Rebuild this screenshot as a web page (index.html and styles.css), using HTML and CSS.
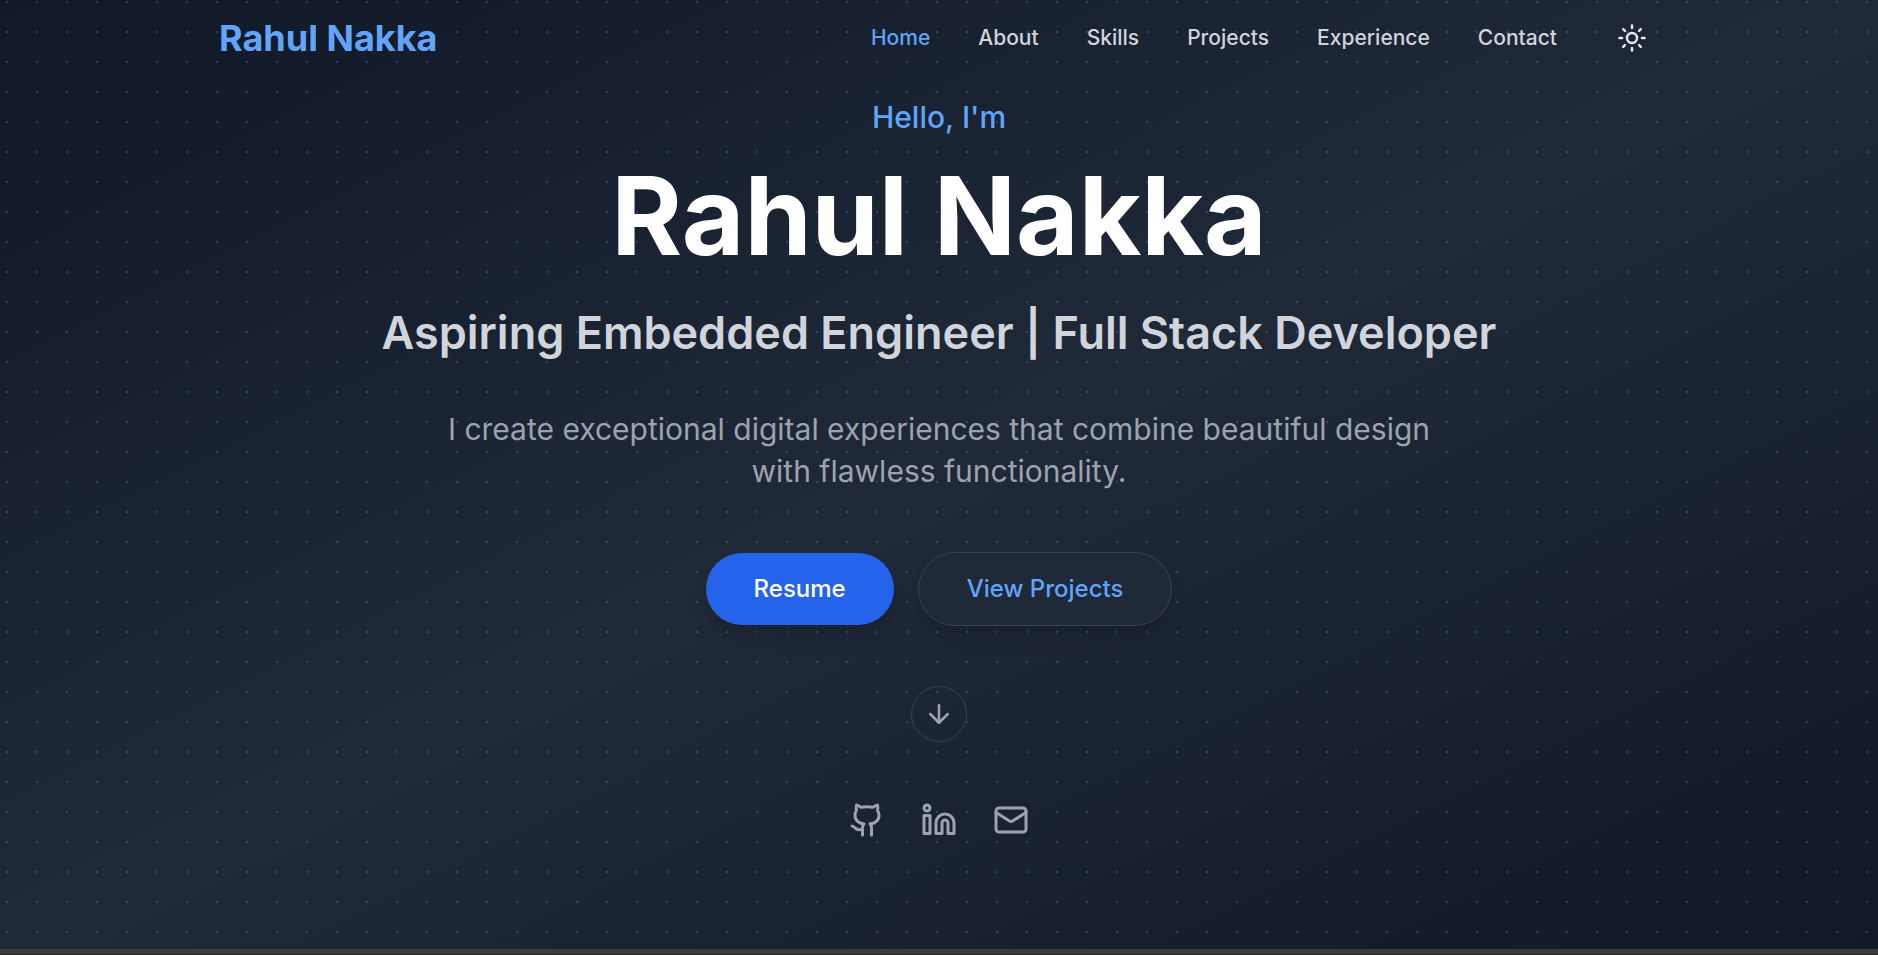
FILE: index.html
```html
<!DOCTYPE html>
<html lang="en">
<head>
    <meta charset="UTF-8">
    <meta name="viewport" content="width=device-width, initial-scale=1.0">
    <title>Rahul Nakka</title>
    <link rel="stylesheet" href="styles.css">
</head>
<body>
    <div class="page">
        <header class="navbar">
            <a href="#home" class="logo">Rahul Nakka</a>

            <nav class="nav-links">
                <a href="#home" class="active">Home</a>
                <a href="#about">About</a>
                <a href="#skills">Skills</a>
                <a href="#projects">Projects</a>
                <a href="#experience">Experience</a>
                <a href="#contact">Contact</a>
                <button type="button" class="theme-toggle" aria-label="Toggle theme">
                    <svg class="icon" viewBox="0 0 24 24">
                        <circle cx="12" cy="12" r="4"/>
                        <path d="M12 2v2"/>
                        <path d="M12 20v2"/>
                        <path d="m4.93 4.93 1.41 1.41"/>
                        <path d="m17.66 17.66 1.41 1.41"/>
                        <path d="M2 12h2"/>
                        <path d="M20 12h2"/>
                        <path d="m6.34 17.66-1.41 1.41"/>
                        <path d="m19.07 4.93-1.41 1.41"/>
                    </svg>
                </button>
            </nav>
        </header>

        <!-- Hero Section -->
        <main class="hero" id="home">
            <p class="greeting">Hello, I'm</p>
            <h1>Rahul Nakka</h1>
            <h2>Aspiring Embedded Engineer | Full Stack Developer</h2>
            <p class="intro">I create exceptional digital experiences that combine beautiful design with flawless functionality.</p>

            <div class="button-container">
                <a href="#resume" class="btn btn-primary">Resume</a>
                <a href="#projects" class="btn btn-secondary">View Projects</a>
            </div>

            <a href="#about" class="scroll-down" aria-label="Scroll to About">
                <svg class="icon" viewBox="0 0 24 24">
                    <path d="M12 5v14"/>
                    <path d="m19 12-7 7-7-7"/>
                </svg>
            </a>

            <div class="social-links">
                <a href="#github" aria-label="GitHub">
                    <svg class="icon icon-large" viewBox="0 0 24 24">
                        <path d="M15 22v-4a4.8 4.8 0 0 0-1-3.5c3 0 6-2 6-5.5.08-1.25-.27-2.48-1-3.5.28-1.15.28-2.35 0-3.5 0 0-1 0-3 1.5-2.64-.5-5.36-.5-8 0C6 2 5 2 5 2c-.3 1.15-.3 2.35 0 3.5A5.403 5.403 0 0 0 4 9c0 3.5 3 5.5 6 5.5-.39.49-.68 1.05-.85 1.65-.17.6-.22 1.23-.15 1.85v4"/>
                        <path d="M9 18c-4.51 2-5-2-7-2"/>
                    </svg>
                </a>
                <a href="#linkedin" aria-label="LinkedIn">
                    <svg class="icon icon-large" viewBox="0 0 24 24">
                        <path d="M16 8a6 6 0 0 1 6 6v7h-4v-7a2 2 0 0 0-2-2 2 2 0 0 0-2 2v7h-4v-7a6 6 0 0 1 6-6z"/>
                        <rect width="4" height="12" x="2" y="9"/>
                        <circle cx="4" cy="4" r="2"/>
                    </svg>
                </a>
                <a href="#contact" aria-label="Email">
                    <svg class="icon icon-large" viewBox="0 0 24 24">
                        <rect width="20" height="16" x="2" y="4" rx="2"/>
                        <path d="m22 7-8.97 5.7a1.94 1.94 0 0 1-2.06 0L2 7"/>
                    </svg>
                </a>
            </div>
        </main>
    </div>
</body>
</html>
```
FILE: styles.css
```css
* {
    box-sizing: border-box;
}

body {
    display: flex;
    min-height: 100vh;
    margin: 0;
    padding-bottom: 6px;
    background: linear-gradient(to top, #222 1px, #3c3c3c 1px);
    font-family: Inter, "Liberation Sans", sans-serif;
    color: #d1d5db;
}

h1, h2, p {
    margin: 0;
}

a {
    color: inherit;
    text-decoration: none;
}

/* dot grid on top of the diagonal gradient */
.page {
    flex: 1;
    background:
        radial-gradient(circle at 7px 2px, rgba(59, 130, 246, 0.35) 1px, transparent 1px) 0 0 / 30px 30px,
        linear-gradient(to bottom right, #111827, #1f2937, #111827);
}

/* Navbar */
.navbar {
    display: flex;
    justify-content: space-between;
    align-items: center;
    max-width: 1536px;
    height: 76px;
    margin: 0 auto;
    padding: 0 48px;
}

.logo {
    color: #60a5fa;
    font-size: 36px;
    font-weight: 700;
    line-height: 48px;
}

.nav-links {
    display: flex;
    align-items: center;
    gap: 48px;
    font-size: 21px;
    font-weight: 500;
    line-height: 30px;
}

.nav-links .active {
    color: #60a5fa;
}

.theme-toggle {
    display: flex;
    padding: 12px;
    border: none;
    border-radius: 50%;
    background: none;
    color: #e5e7eb;
    cursor: pointer;
}

.icon {
    width: 30px;
    height: 30px;
    fill: none;
    stroke: currentColor;
    stroke-width: 2;
    stroke-linecap: round;
    stroke-linejoin: round;
}

.icon-large {
    width: 36px;
    height: 36px;
}

/* Hero */
.hero {
    display: flex;
    flex-direction: column;
    align-items: center;
    padding: 20px 48px 108px;
    text-align: center;
}

.greeting {
    margin-bottom: 24px;
    color: #60a5fa;
    font-size: 30px;
    font-weight: 500;
    line-height: 42px;
}

h1 {
    margin-bottom: 36px;
    color: #fff;
    font-size: 108px;
    font-weight: 700;
    line-height: 108px;
}

h2 {
    margin-bottom: 48px;
    font-size: 45px;
    font-weight: 600;
    line-height: 54px;
}

.intro {
    max-width: 1008px;
    margin-bottom: 60px;
    color: #9ca3af;
    font-size: 30px;
    line-height: 42px;
}

.button-container {
    display: flex;
    align-items: center;
    gap: 24px;
    margin-bottom: 60px;
}

.btn {
    padding: 18px 48px;
    border-radius: 40px;
    font-size: 24px;
    font-weight: 500;
    line-height: 36px;
    box-shadow: 0 15px 22px -4px rgba(0, 0, 0, 0.1), 0 6px 9px -6px rgba(0, 0, 0, 0.1);
}

.btn-primary {
    background-color: #2563eb;
    color: #fff;
}

.btn-secondary {
    border: 1px solid #374151;
    background-color: #1f2937;
    color: #60a5fa;
}

.scroll-down {
    display: flex;
    margin-bottom: 60px;
    padding: 12px;
    border: 1px solid #374151;
    border-radius: 50%;
    color: #9ca3af;
}

.social-links {
    display: flex;
    gap: 36px;
    color: #9ca3af;
}

.social-links a {
    display: flex;
}
```
